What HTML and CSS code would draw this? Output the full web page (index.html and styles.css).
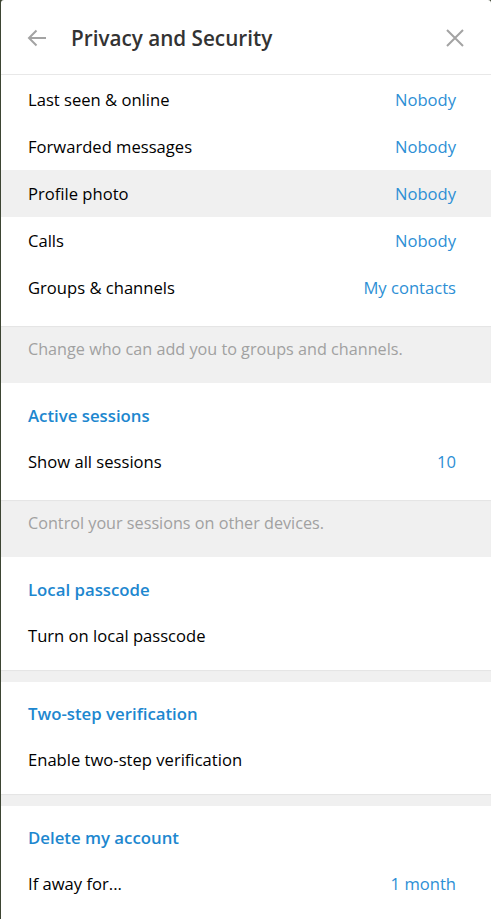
FILE: index.html
```html
<!DOCTYPE html>
<html>
<head>
<meta charset="utf-8">
<link rel="stylesheet" href="styles.css">
</head>
<body>
<div class="panel">
  <header class="header">
    <svg class="icon back" width="24" height="24" viewBox="0 0 24 24"><path d="M21 12H4M11.5 4.5L4 12l7.5 7.5" fill="none" stroke="#a3a3a3" stroke-width="2"/></svg>
    <h1 class="title">Privacy and Security</h1>
    <svg class="icon close" width="24" height="24" viewBox="0 0 24 24"><path d="M4 4L20 20M20 4L4 20" fill="none" stroke="#a3a3a3" stroke-width="2"/></svg>
  </header>

  <section class="section first">
    <div class="row"><span>Last seen &amp; online</span><span class="value">Nobody</span></div>
    <div class="row"><span>Forwarded messages</span><span class="value">Nobody</span></div>
    <div class="row hover"><span>Profile photo</span><span class="value">Nobody</span></div>
    <div class="row"><span>Calls</span><span class="value">Nobody</span></div>
    <div class="row"><span>Groups &amp; channels</span><span class="value">My contacts</span></div>
  </section>
  <div class="desc">Change who can add you to groups and channels.</div>

  <section class="section sessions">
    <div class="heading">Active sessions</div>
    <div class="row"><span>Show all sessions</span><span class="value">10</span></div>
  </section>
  <div class="desc">Control your sessions on other devices.</div>

  <section class="section passcode">
    <div class="heading">Local passcode</div>
    <div class="row"><span>Turn on local passcode</span></div>
  </section>
  <div class="strip"></div>

  <section class="section twostep">
    <div class="heading tight">Two-step verification</div>
    <div class="row"><span>Enable two-step verification</span></div>
  </section>
  <div class="strip"></div>

  <section class="section account">
    <div class="heading tight">Delete my account</div>
    <div class="row"><span>If away for...</span><span class="value">1 month</span></div>
  </section>
</div>
</body>
</html>
```
FILE: styles.css
```css
* { box-sizing: border-box; }
html, body { margin: 0; padding: 0; }
body {
  background: #3d4533;
  height: 919px;
  overflow: hidden;
  font-family: "Open Sans", "Noto Sans", sans-serif;
}
.panel {
  margin-left: 1px;
  background: #fff;
  min-height: 919px;
  border-radius: 3px 3px 0 0;
}
.header {
  height: 75px;
  border-bottom: 1px solid #e8e8e8;
  display: flex;
  align-items: center;
  padding: 2px 0 0 0;
}
.icon { flex: none; display: block; }
.back { margin-left: 24px; }
.title {
  margin: 0 0 0 22px;
  font-size: 20.7px;
  font-weight: 600;
  color: #333;
  flex: 1;
}
.close { margin-right: 24px; }
.section { background: #fff; }
.first { padding: 1px 0 15px; }
.row {
  height: 47px;
  display: flex;
  align-items: center;
  justify-content: space-between;
  padding: 0 35px 0 27px;
  font-size: 16.6px;
  color: #000;
}
.row.hover { background: #f0f0f0; }
.value { color: #2d8fd5; }
.heading {
  padding: 22px 27px 11px;
  line-height: 22px;
  font-size: 16.8px;
  font-weight: 600;
  color: #1d87cf;
}
.heading.tight { padding-top: 21px; }
.sessions { padding-bottom: 15px; }
.passcode { padding-bottom: 11px; }
.twostep { padding-bottom: 11px; }
.desc {
  background: #f0f0f0;
  box-shadow: inset 0 1px 1px rgba(0,0,0,0.05);
  padding: 12px 27px 23px;
  line-height: 22px;
  font-size: 16.2px;
  color: #a1a1a1;
}
.strip {
  height: 12px;
  background: #f0f0f0;
  box-shadow: inset 0 1px 1px rgba(0,0,0,0.05);
}
```
